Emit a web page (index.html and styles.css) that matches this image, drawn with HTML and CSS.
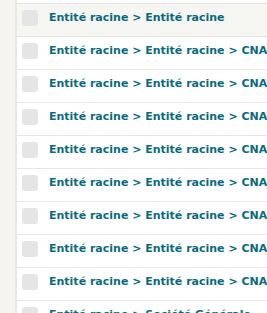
FILE: index.html
```html
<!DOCTYPE html>
<html lang="fr">
<head>
  <meta charset="UTF-8" />
  <meta name="viewport" content="width=device-width, initial-scale=1"/>
  <title>Entités</title>
  <link rel="stylesheet" href="styles.css">
</head>
<body>
  <div class="page">
    <!-- Side strip -->
    <aside class="side"></aside>

    <!-- Entity list -->
    <main class="list">
      <div class="row row-active">
        <span class="check"></span>
        <a class="name" href="#">Entité racine &gt; Entité racine</a>
      </div>
      <div class="row">
        <span class="check"></span>
        <a class="name" href="#">Entité racine &gt; Entité racine &gt; CNAM</a>
      </div>
      <div class="row">
        <span class="check"></span>
        <a class="name" href="#">Entité racine &gt; Entité racine &gt; CNAM</a>
      </div>
      <div class="row">
        <span class="check"></span>
        <a class="name" href="#">Entité racine &gt; Entité racine &gt; CNAM</a>
      </div>
      <div class="row">
        <span class="check"></span>
        <a class="name" href="#">Entité racine &gt; Entité racine &gt; CNAM</a>
      </div>
      <div class="row">
        <span class="check"></span>
        <a class="name" href="#">Entité racine &gt; Entité racine &gt; CNAM</a>
      </div>
      <div class="row">
        <span class="check"></span>
        <a class="name" href="#">Entité racine &gt; Entité racine &gt; CNAM</a>
      </div>
      <div class="row">
        <span class="check"></span>
        <a class="name" href="#">Entité racine &gt; Entité racine &gt; CNAM</a>
      </div>
      <div class="row">
        <span class="check"></span>
        <a class="name" href="#">Entité racine &gt; Entité racine &gt; CNAM</a>
      </div>
      <div class="row">
        <span class="check"></span>
        <a class="name" href="#">Entité racine &gt; Société Générale</a>
      </div>
    </main>
  </div>
</body>
</html>
```

FILE: styles.css
```css
/* Base */
html, body {
  margin: 0;
  padding: 0;
  overflow: hidden;
}

body {
  font-family: 'DejaVu Sans', sans-serif;
  background: #ffffff;
  height: 313px;
}

.page {
  display: flex;
  height: 313px;
}

/* Side strip */
.side {
  width: 15px;
  flex: none;
  background: #f5f4f0;
  border-right: 2px solid #e9e7e2;
}

/* Entity list */
.list {
  flex: 1;
  min-width: 0;
  padding-top: 3px;
}

.row {
  display: flex;
  align-items: flex-start;
  gap: 11px;
  padding: 6px 0 0 5px;
  box-sizing: border-box;
  height: 33px;
  border-top: 1px solid #e6e6e6;
  white-space: nowrap;
}

.row-active {
  background: #f5f5f1;
}

.check {
  flex: none;
  width: 16px;
  height: 16px;
  border-radius: 3px;
  background: #e5e5e5;
}

.name {
  margin-top: 1px;
  font-size: 11px;
  font-weight: bold;
  line-height: 14px;
  color: #0b6a7e;
  text-decoration: none;
}
```
